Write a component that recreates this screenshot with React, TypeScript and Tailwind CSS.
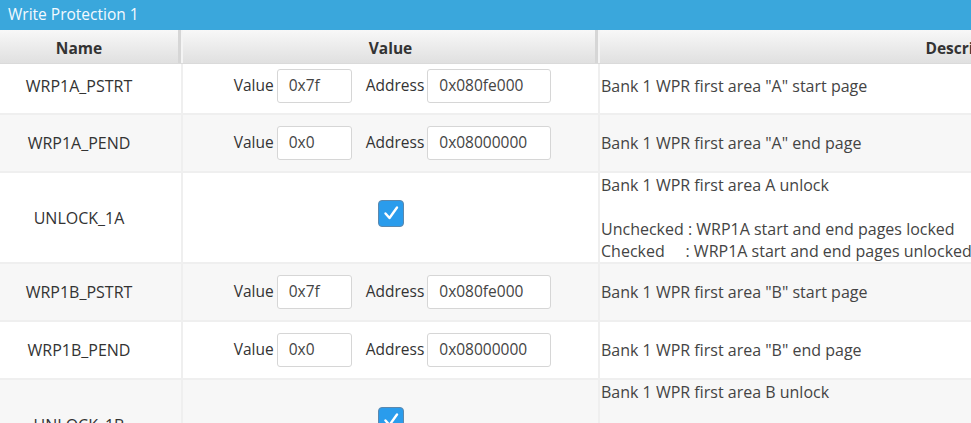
import React from "react";

type Row = {
  name: string;
  kind: "input" | "check";
  value?: string;
  address?: string;
  desc: string[];
  h: string;
};

const rows: Row[] = [
  { name: "WRP1A_PSTRT", kind: "input", value: "0x7f", address: "0x080fe000", desc: ['Bank 1 WPR first area "A" start page'], h: "h-[49px] pb-[6px]" },
  { name: "WRP1A_PEND", kind: "input", value: "0x0", address: "0x08000000", desc: ['Bank 1 WPR first area "A" end page'], h: "h-[56px]" },
  {
    name: "UNLOCK_1A",
    kind: "check",
    desc: [
      "Bank 1 WPR first area A unlock",
      "",
      "Unchecked : WRP1A start and end pages locked",
      "Checked     : WRP1A start and end pages unlocked",
    ],
    h: "h-[89px]",
  },
  { name: "WRP1B_PSTRT", kind: "input", value: "0x7f", address: "0x080fe000", desc: ['Bank 1 WPR first area "B" start page'], h: "h-[56px]" },
  { name: "WRP1B_PEND", kind: "input", value: "0x0", address: "0x08000000", desc: ['Bank 1 WPR first area "B" end page'], h: "h-[56px]" },
  {
    name: "UNLOCK_1B",
    kind: "check",
    desc: [
      "Bank 1 WPR first area B unlock",
      "",
      "Unchecked : WRP1B start and end pages locked",
      "Checked     : WRP1B start and end pages unlocked",
    ],
    h: "h-[89px]",
  },
];

function Checkbox() {
  return (
    <div className="w-[26px] h-[27px] rounded-[4px] bg-[#2a9cec] border border-[#5c88ad] flex items-center justify-center mb-[9px]">
      <svg width="18" height="18" viewBox="0 0 18 18">
        <path d="M3.5 9.5 L7.5 14 L15 3.5" fill="none" stroke="white" strokeWidth="2.4" strokeLinecap="round" strokeLinejoin="round" />
      </svg>
    </div>
  );
}

function Field({ label, value, w }: { label: string; value: string; w: string }) {
  return (
    <div className="flex items-center gap-[3px]">
      <span>{label}</span>
      <div className={`${w} h-[34px] rounded-[3px] border border-[#d6d6d6] bg-white flex items-center pl-[11px] text-[#444]`}>
        {value}
      </div>
    </div>
  );
}

export default function App() {
  return (
    <div
      className="w-[971px] h-[423px] overflow-hidden bg-white text-[15.5px] text-[#333]"
      style={{ fontFamily: '"Open Sans", "Noto Sans", sans-serif' }}
    >
      {/* Title */}
      <div className="h-[30px] bg-[#3aa7dc] text-[#f4faff] flex items-center pl-[8px]">Write Protection 1</div>

      {/* Table, scrolled slightly to the right */}
      <div className="w-[1363px] -ml-[23px]">
        {/* Header */}
        <div className="flex h-[34px] pt-[5px] bg-gradient-to-b from-[#f8f8f8] to-[#e0e0e0] font-bold text-[#333] border-b border-[#dadada]">
          <div className="w-[206px] border-r-2 border-[#f4f4f4] shadow-[inset_-3px_0_0_#d6d6d6] -mt-[5px] pt-[5px] flex items-center justify-center">Name</div>
          <div className="w-[417px] border-r-2 border-[#f4f4f4] shadow-[inset_-3px_0_0_#d6d6d6] -mt-[5px] pt-[5px] flex items-center justify-center">Value</div>
          <div className="w-[740px] flex items-center justify-center">Description</div>
        </div>

        {rows.map((r, i) => (
          <div
            key={r.name}
            className={`flex border-b-2 border-[#efefef] ${i % 2 === 1 ? "bg-[#f7f7f7]" : "bg-white"}`}
          >
            <div className={`w-[206px] shrink-0 border-r-2 border-[#efefef] flex items-center justify-center text-[16px] ${r.h}`}>
              {r.name}
            </div>
            <div className={`w-[417px] shrink-0 border-r-2 border-[#efefef] flex items-center justify-center ${r.h}`}>
              {r.kind === "input" ? (
                <div className="flex items-center gap-[14px] pl-[4px]">
                  <Field label="Value" value={r.value!} w="w-[75px]" />
                  <Field label="Address" value={r.address!} w="w-[124px]" />
                </div>
              ) : (
                <Checkbox />
              )}
            </div>
            <div className={`w-[740px] shrink-0 flex flex-col justify-center pl-[1px] text-[#444] text-[16px] leading-[22px] ${r.h}`}>
              {r.desc.map((d, j) => (
                <div key={j} className="whitespace-pre h-[22px]">
                  {d}
                </div>
              ))}
            </div>
          </div>
        ))}
      </div>
    </div>
  );
}
